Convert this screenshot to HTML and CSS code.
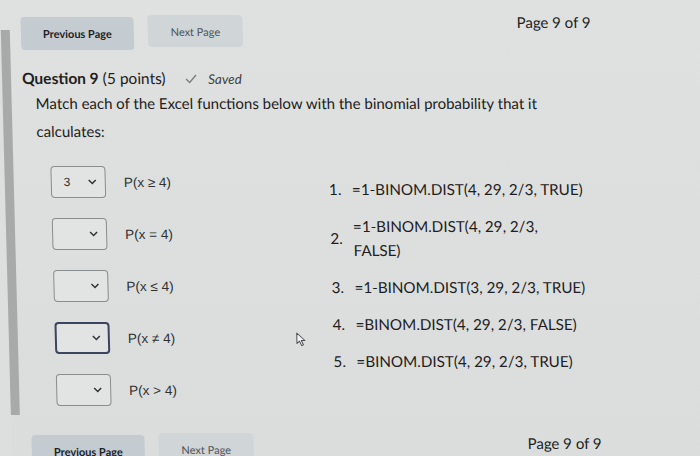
FILE: index.html
```html
<!DOCTYPE html>
<html>
<head>
<meta charset="utf-8">
<link rel="stylesheet" href="styles.css">
</head>
<body>
<div class="page">
  <div class="bar"></div>
  <div class="content">
    <div class="nav">
      <div class="btn btn-prev">Previous Page</div>
      <div class="btn btn-next">Next Page</div>
      <div class="pageno">Page 9 of 9</div>
    </div>
    <div class="qhead">
      <span class="qtitle">Question 9</span> <span class="qpts">(5 points)</span>
      <span class="saved">
        <svg class="check" width="12" height="10" viewBox="0 0 12 10"><polyline points="1,5 4.5,8.5 11,1" fill="none" stroke="#7c7f80" stroke-width="1.4"/></svg>
        <em>Saved</em>
      </span>
    </div>
    <p class="prompt">Match each of the Excel functions below with the binomial probability that it calculates:</p>
    <div class="match">
      <div class="left">
        <div class="row"><div class="sel"><span class="val">3</span><svg class="chev" width="9" height="6" viewBox="0 0 9 6"><polyline points="1,1 4.5,4.5 8,1" fill="none" stroke="#333" stroke-width="1.5"/></svg></div><span class="lbl">P(x ≥ 4)</span></div>
        <div class="row"><div class="sel"><span class="val"></span><svg class="chev" width="9" height="6" viewBox="0 0 9 6"><polyline points="1,1 4.5,4.5 8,1" fill="none" stroke="#333" stroke-width="1.5"/></svg></div><span class="lbl">P(x = 4)</span></div>
        <div class="row"><div class="sel"><span class="val"></span><svg class="chev" width="9" height="6" viewBox="0 0 9 6"><polyline points="1,1 4.5,4.5 8,1" fill="none" stroke="#333" stroke-width="1.5"/></svg></div><span class="lbl">P(x ≤ 4)</span></div>
        <div class="row"><div class="sel focus"><span class="val"></span><svg class="chev" width="9" height="6" viewBox="0 0 9 6"><polyline points="1,1 4.5,4.5 8,1" fill="none" stroke="#333" stroke-width="1.5"/></svg></div><span class="lbl">P(x ≠ 4)</span></div>
        <div class="row"><div class="sel"><span class="val"></span><svg class="chev" width="9" height="6" viewBox="0 0 9 6"><polyline points="1,1 4.5,4.5 8,1" fill="none" stroke="#333" stroke-width="1.5"/></svg></div><span class="lbl">P(x &gt; 4)</span></div>
      </div>
      <ol class="right">
        <li><span class="num">1.</span><span class="txt">=1-BINOM.DIST(4, 29, 2/3, TRUE)</span></li>
        <li><span class="num">2.</span><span class="txt">=1-BINOM.DIST(4, 29, 2/3, FALSE)</span></li>
        <li><span class="num">3.</span><span class="txt">=1-BINOM.DIST(3, 29, 2/3, TRUE)</span></li>
        <li><span class="num">4.</span><span class="txt">=BINOM.DIST(4, 29, 2/3, FALSE)</span></li>
        <li><span class="num">5.</span><span class="txt">=BINOM.DIST(4, 29, 2/3, TRUE)</span></li>
      </ol>
    </div>
    <div class="nav nav-bottom">
      <div class="btn btn-prev">Previous Page</div>
      <div class="btn btn-next">Next Page</div>
      <div class="pageno">Page 9 of 9</div>
    </div>
  </div>
  <svg class="cursor" width="12" height="15" viewBox="0 0 12 15"><path d="M1,1 L1,11.5 L3.6,9.2 L5.6,13.6 L7.4,12.8 L5.4,8.5 L9,8.5 Z" fill="#f2f3f3" stroke="#4a4d50" stroke-width="1" stroke-linejoin="round"/></svg>
</div>
</body>
</html>
```
FILE: styles.css
```css
html, body {
  margin: 0;
  padding: 0;
  background: #dcdfde;
  overflow: hidden;
}
.page {
  width: 700px;
  height: 456px;
  display: flex;
  position: relative;
  transform: skewX(1.5deg);
  transform-origin: 0 0;
  font-family: Lato, "Liberation Sans", sans-serif;
  color: #1f2021;
  background: linear-gradient(180deg, #dee1e0 0%, #dadddc 100%);
}
.bar {
  width: 9px;
  margin-top: 30px;
  height: 385px;
  background: #a8aaa9;
  flex: none;
}
.content {
  flex: 1;
  padding-left: 11px;
  padding-right: 110px;
}
.nav {
  display: flex;
  align-items: flex-start;
  padding-top: 12px;
}
.btn {
  border-radius: 4px;
  display: flex;
  align-items: center;
  justify-content: center;
  font-size: 11px;
}
.btn-prev {
  width: 113px;
  height: 33px;
  margin-top: 5px;
  background: #c4ccd2;
  color: #1d2226;
  font-weight: bold;
}
.btn-next {
  width: 95px;
  height: 32px;
  margin-top: 3px;
  margin-left: 14px;
  background: #d0d5d8;
  color: #4f5457;
}
.pageno {
  margin-left: auto;
  font-size: 15px;
  line-height: 20px;
  color: #222;
}
.qhead {
  margin-top: 18px;
  line-height: 20px;
  font-size: 15.5px;
}
.qtitle {
  font-weight: bold;
}
.saved {
  margin-left: 16px;
  font-size: 13.5px;
  color: #3d4042;
}
.check {
  margin-right: 7px;
  vertical-align: 0;
}
.prompt {
  margin: 0 0 0 13px;
  width: 505px;
  font-size: 15px;
  line-height: 28px;
}
.match {
  display: grid;
  grid-template-columns: 304px 1fr;
  margin-top: 21px;
}
.left {
  display: flex;
  flex-direction: column;
  gap: 20px;
}
.row {
  display: flex;
  align-items: center;
  padding-left: 26px;
}
.sel {
  width: 55px;
  height: 32px;
  box-sizing: border-box;
  border: 1px solid #8a8d8d;
  border-radius: 4px;
  background: #e1e4e3;
  display: flex;
  align-items: center;
  flex: none;
}
.sel.focus {
  border: 2px solid #3b4560;
}
.val {
  width: 24px;
  padding-left: 12px;
  font-family: "Liberation Sans", Arial, sans-serif;
  font-size: 12px;
  color: #333;
}
.sel.focus .val {
  padding-left: 11px;
}
.chev {
  display: block;
}
.lbl {
  margin-left: 18px;
  font-family: "Liberation Sans", Arial, sans-serif;
  font-size: 13.5px;
  color: #2e3031;
}
.right {
  list-style: none;
  margin: 0;
  padding: 11px 0 0 0;
  display: flex;
  flex-direction: column;
  gap: 13px;
}
.right li {
  display: flex;
  align-items: center;
  font-size: 15.2px;
  line-height: 24px;
}
.num {
  width: 23px;
  flex: none;
}
.txt {
  width: 231px;
}
.nav-bottom {
  margin-top: 27px;
  padding-top: 0;
}
.nav-bottom .btn-prev {
  margin-top: 2px;
}
.nav-bottom .btn-next {
  margin-top: 0;
}
.cursor {
  position: absolute;
  left: 287px;
  top: 332px;
}
```
